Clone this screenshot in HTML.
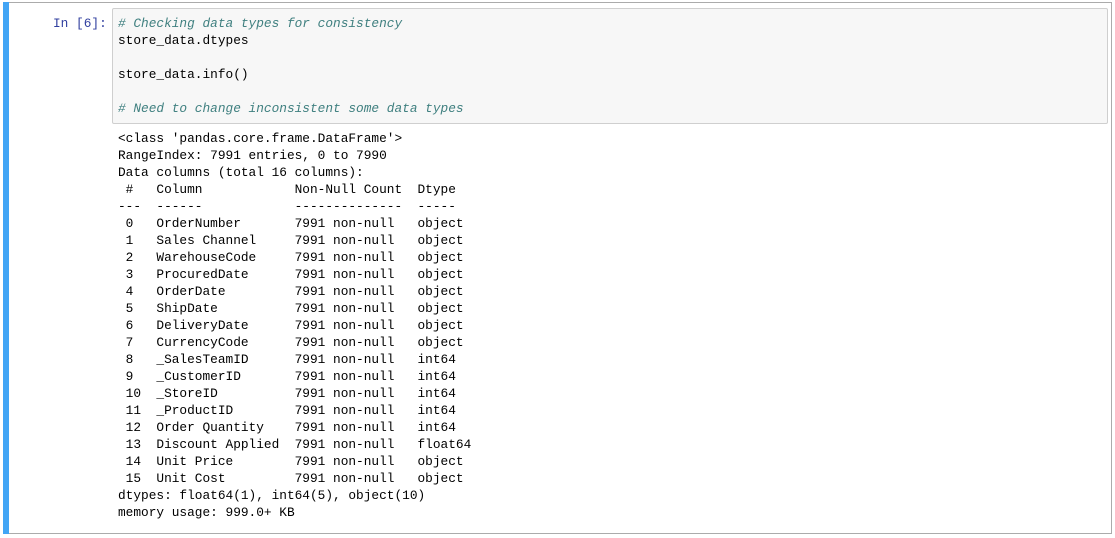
<!DOCTYPE html>
<html><head><meta charset="utf-8"><style>
html,body{margin:0;padding:0;background:#fff;width:1115px;height:538px;overflow:hidden}
.cell{position:absolute;left:3px;top:2px;width:1108px;height:530px;border:1px solid #ababab;border-left:none;}
.bar{position:absolute;left:3px;top:2px;width:6px;height:532px;background:#42a5f5}
.prompt{position:absolute;left:53px;top:15px;font:12.8px "Liberation Mono",monospace;color:#303f9f;line-height:17px}
.input{position:absolute;left:112px;top:8px;width:994px;height:114px;background:#f7f7f7;border:1px solid #cfcfcf;border-radius:2px}
pre{margin:0;font:12.8px "Liberation Mono",monospace;line-height:17px;color:#000;white-space:pre}
.in{position:absolute;left:118px;top:15px}
.out{position:absolute;left:118px;top:130px}
.c{color:#408080;font-style:italic}
</style></head><body>
<div class="cell"></div>
<div class="bar"></div>
<div class="prompt">In [6]:</div>
<div class="input"></div>
<pre class="in"><span class="c"># Checking data types for consistency</span>
store_data.dtypes

store_data.info()

<span class="c"># Need to change inconsistent some data types</span></pre>
<pre class="out">&lt;class 'pandas.core.frame.DataFrame'&gt;
RangeIndex: 7991 entries, 0 to 7990
Data columns (total 16 columns):
 #   Column            Non-Null Count  Dtype 
---  ------            --------------  ----- 
 0   OrderNumber       7991 non-null   object
 1   Sales Channel     7991 non-null   object
 2   WarehouseCode     7991 non-null   object
 3   ProcuredDate      7991 non-null   object
 4   OrderDate         7991 non-null   object
 5   ShipDate          7991 non-null   object
 6   DeliveryDate      7991 non-null   object
 7   CurrencyCode      7991 non-null   object
 8   _SalesTeamID      7991 non-null   int64 
 9   _CustomerID       7991 non-null   int64 
 10  _StoreID          7991 non-null   int64 
 11  _ProductID        7991 non-null   int64 
 12  Order Quantity    7991 non-null   int64 
 13  Discount Applied  7991 non-null   float64
 14  Unit Price        7991 non-null   object
 15  Unit Cost         7991 non-null   object
dtypes: float64(1), int64(5), object(10)
memory usage: 999.0+ KB</pre>
</body></html>
